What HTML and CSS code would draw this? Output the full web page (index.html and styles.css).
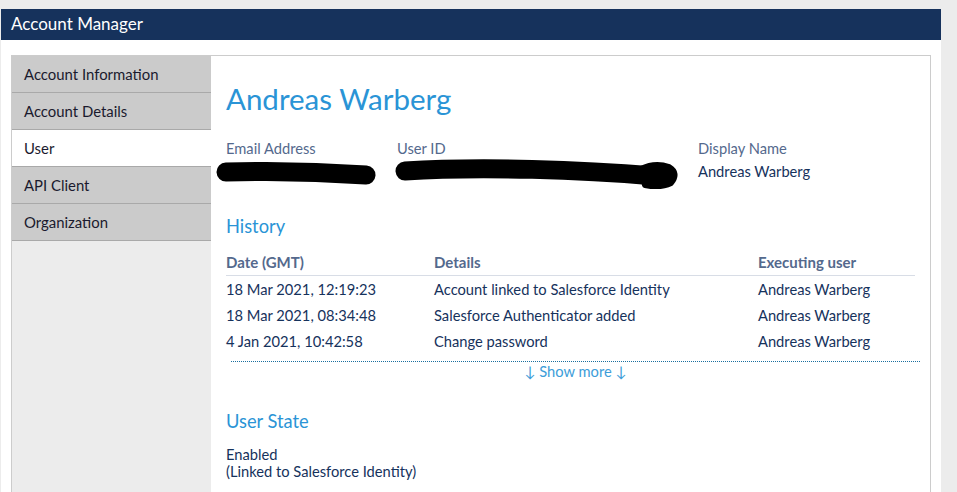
FILE: index.html
```html
<!DOCTYPE html>
<html>
<head>
<meta charset="utf-8">
<link rel="stylesheet" href="styles.css">
</head>
<body>
<div class="app">
  <header class="topbar">Account Manager</header>
  <div class="panel">
    <div class="box">
      <nav class="sidebar">
        <div class="nav-item">Account Information</div>
        <div class="nav-item">Account Details</div>
        <div class="nav-item active">User</div>
        <div class="nav-item">API Client</div>
        <div class="nav-item">Organization</div>
      </nav>
      <main class="content">
        <h1 class="name">Andreas Warberg</h1>
        <div class="fields">
          <div class="field">
            <div class="label">Email Address</div>
            <svg class="scribble email" width="170" height="30" viewBox="0 0 170 30">
              <path d="M10 13 Q 80 11 150 16" fill="none" stroke="#000" stroke-width="19" stroke-linecap="round"/>
            </svg>
          </div>
          <div class="field">
            <div class="label">User ID</div>
            <svg class="scribble uid" width="290" height="34" viewBox="0 0 290 34">
              <path d="M12 14 C 90 9, 190 13, 262 19" fill="none" stroke="#000" stroke-width="19" stroke-linecap="round"/>
              <path d="M248 12 Q 262 5 276 10 Q 286 16 278 26 Q 268 31 252 28 Z" fill="#000" stroke="#000" stroke-width="6" stroke-linejoin="round"/>
            </svg>
          </div>
          <div class="field">
            <div class="label">Display Name</div>
            <div class="value">Andreas Warberg</div>
          </div>
        </div>

        <h2 class="section">History</h2>
        <table class="history">
          <thead>
            <tr><th class="c-date">Date (GMT)</th><th class="c-det">Details</th><th>Executing user</th></tr>
          </thead>
          <tbody>
            <tr><td>18 Mar 2021, 12:19:23</td><td>Account linked to Salesforce Identity</td><td>Andreas Warberg</td></tr>
            <tr><td>18 Mar 2021, 08:34:48</td><td>Salesforce Authenticator added</td><td>Andreas Warberg</td></tr>
            <tr><td>4 Jan 2021, 10:42:58</td><td>Change password</td><td>Andreas Warberg</td></tr>
          </tbody>
        </table>
        <div class="more"><span class="arrow">↓</span> Show more <span class="arrow">↓</span></div>

        <h2 class="section state">User State</h2>
        <div class="state-text">Enabled<br>(Linked to Salesforce Identity)</div>
      </main>
    </div>
  </div>
</div>
</body>
</html>
```

FILE: styles.css
```css
html, body {
  margin: 0;
  padding: 0;
  background: #ececec;
  height: 100%;
  overflow: hidden;
}
body {
  font-family: Lato, "Open Sans", sans-serif;
  font-size: 14.7px;
  color: #16325c;
}
.app {
  margin: 9px 16px 0 1px;
  display: flex;
  flex-direction: column;
  height: calc(100% - 9px);
}
.topbar {
  background: #16325c;
  color: #fff;
  height: 31px;
  line-height: 30px;
  font-size: 17px;
  padding-left: 10px;
}
.panel {
  background: #fff;
  flex: 1;
  padding: 15px 10px 0 10px;
  display: flex;
}
.box {
  flex: 1;
  border: 1px solid #cccccc;
  border-bottom: none;
  display: flex;
}
.sidebar {
  width: 199px;
  background: #ececec;
  flex-shrink: 0;
}
.nav-item {
  background: #cbcbcb;
  height: 36px;
  line-height: 36px;
  border-bottom: 1px solid #a9a9a9;
  padding-left: 12px;
  color: #1a1a2e;
  font-size: 14.9px;
}
.nav-item.active {
  background: #fff;
}
.content {
  flex: 1;
  padding: 26px 15px 0 15px;
}
.name {
  margin: 0;
  font-weight: 400;
  font-size: 29.5px;
  line-height: 34px;
  color: #2a94d6;
}
.fields {
  display: grid;
  grid-template-columns: 171px 301px auto;
  margin-top: 22px;
}
.label {
  color: #54698d;
  line-height: 20px;
}
.value {
  line-height: 20px;
  margin-top: 3px;
}
.scribble {
  display: block;
}
.scribble.email {
  margin-left: -10px;
  margin-top: 1px;
}
.scribble.uid {
  margin-left: -4px;
  margin-top: -1px;
}
.section {
  margin: 0;
  font-weight: 400;
  font-size: 18.3px;
  line-height: 24px;
  color: #2a94d6;
}
.fields + .section {
  margin-top: 23px;
}
.history {
  width: 689px;
  border-collapse: collapse;
  margin-top: 11px;
}
.history th {
  text-align: left;
  font-weight: 700;
  font-size: 15px;
  color: #54698d;
  height: 26px;
  padding: 0;
  border-bottom: 1px solid #d8dde6;
  vertical-align: middle;
}
.history td {
  padding: 0;
  height: 26px;
  vertical-align: middle;
}
.c-date { width: 208px; }
.c-det { width: 324px; }
.more {
  margin: 7px -5px 0 5px;
  border-top: 1px dotted #1a6f9e;
  text-align: center;
  color: #3d9dd9;
  line-height: 19px;
}
.section.state {
  margin-top: 28px;
}
.state-text {
  margin-top: 13px;
  line-height: 17px;
}
```
